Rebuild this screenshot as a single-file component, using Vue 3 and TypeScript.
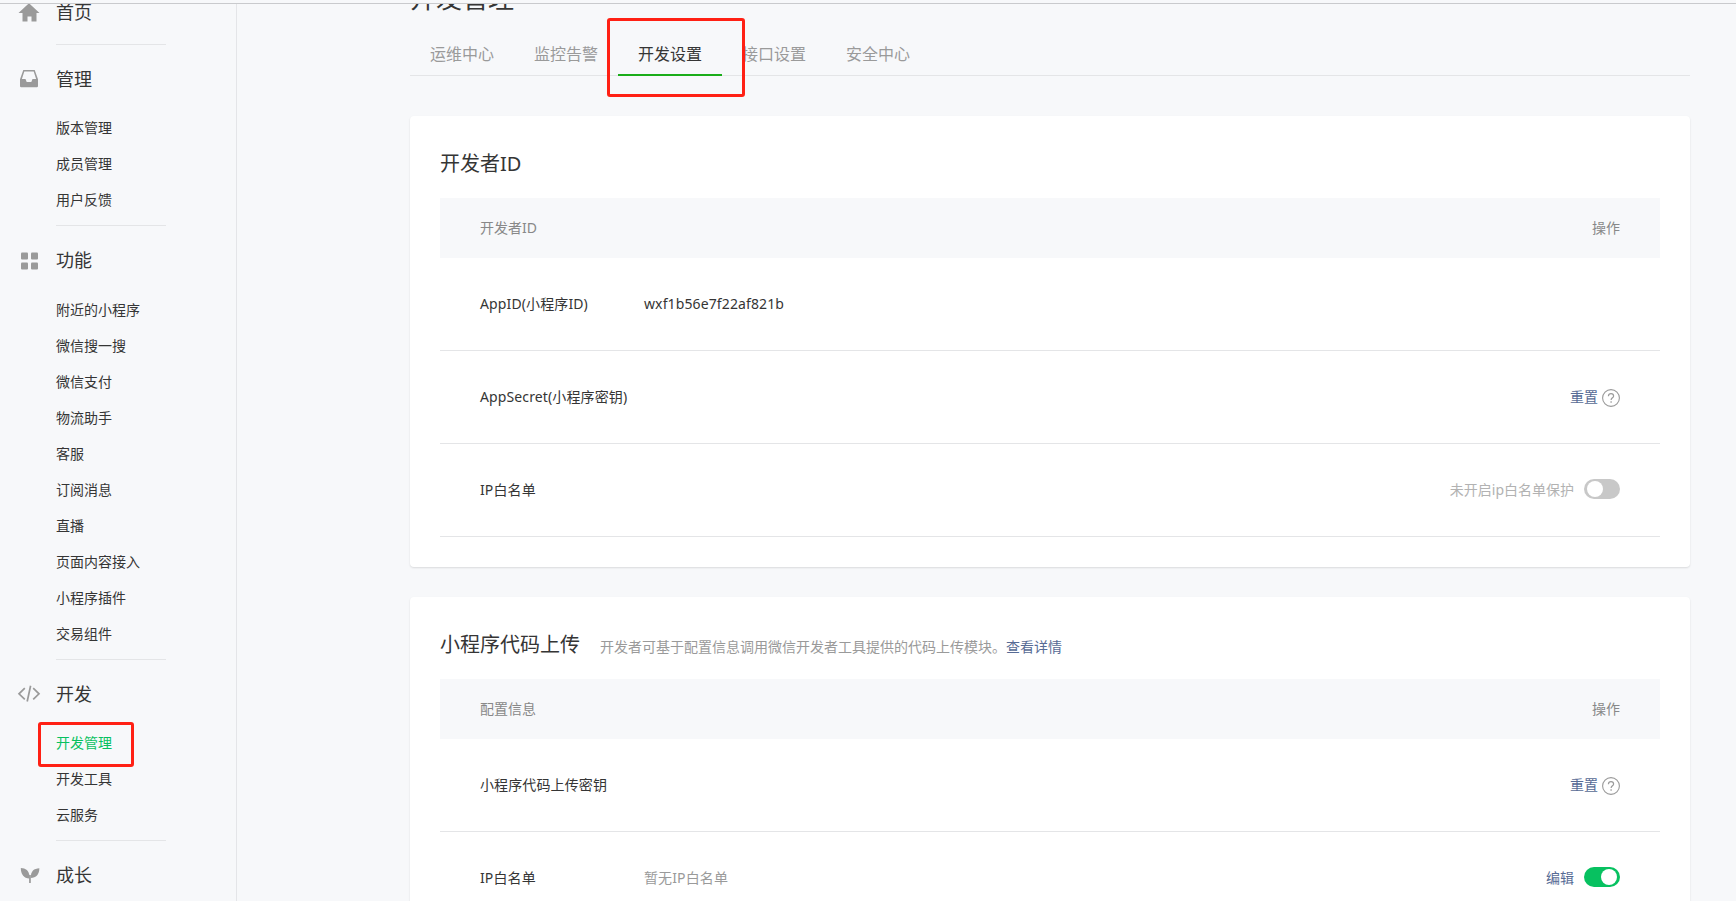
<script setup lang="ts">
interface MenuSection {
  icon: 'home' | 'inbox' | 'grid' | 'code' | 'plant'
  title: string
  items: string[]
}

const sections: MenuSection[] = [
  { icon: 'home', title: '首页', items: [] },
  { icon: 'inbox', title: '管理', items: ['版本管理', '成员管理', '用户反馈'] },
  {
    icon: 'grid',
    title: '功能',
    items: [
      '附近的小程序', '微信搜一搜', '微信支付', '物流助手', '客服',
      '订阅消息', '直播', '页面内容接入', '小程序插件', '交易组件',
    ],
  },
  { icon: 'code', title: '开发', items: ['开发管理', '开发工具', '云服务'] },
  { icon: 'plant', title: '成长', items: [] },
]
const activeItem = '开发管理'

const tabs: string[] = ['运维中心', '监控告警', '开发设置', '接口设置', '安全中心']
const activeTab = '开发设置'

interface Row {
  name: string
  value?: string
  muted?: boolean
  reset?: boolean
  hint?: string
  link?: string
  on?: boolean
}
interface Card {
  title: string
  desc?: string
  more?: string
  head: string
  rows: Row[]
}

const cards: Card[] = [
  {
    title: '开发者ID',
    head: '开发者ID',
    rows: [
      { name: 'AppID(小程序ID)', value: 'wxf1b56e7f22af821b' },
      { name: 'AppSecret(小程序密钥)', reset: true },
      { name: 'IP白名单', hint: '未开启ip白名单保护', on: false },
    ],
  },
  {
    title: '小程序代码上传',
    desc: '开发者可基于配置信息调用微信开发者工具提供的代码上传模块。',
    more: '查看详情',
    head: '配置信息',
    rows: [
      { name: '小程序代码上传密钥', reset: true },
      { name: 'IP白名单', value: '暂无IP白名单', muted: true, link: '编辑', on: true },
    ],
  },
]
</script>

<template>
  <div class="page">
    <div class="topbar"></div>
    <div class="body">
      <aside class="side">
        <section v-for="s in sections" :key="s.title" class="section">
          <h3 class="section-title">
            <svg class="icon" viewBox="0 0 24 24" width="24" height="24">
              <g v-if="s.icon === 'home'" fill="#9a9a9a">
                <path d="M12 2.2 22.5 12h-3v8.5h-5v-5h-4v5h-5V12h-4z" />
              </g>
              <path
                v-else-if="s.icon === 'inbox'"
                fill="#9a9a9a"
                fill-rule="evenodd"
                d="M6.3 3h11.4L21 12.3V19a1.2 1.2 0 0 1-1.2 1.2H4.2A1.2 1.2 0 0 1 3 19v-6.700zM7.300 4.500 4.900 12h3.600l1.200 3h4.600l1.200-3h3.600L16.700 4.500z"
              />
              <g v-else-if="s.icon === 'grid'" fill="#9a9a9a">
                <rect x="4" y="3.500" width="7" height="7" rx="1" />
                <rect x="14" y="3.500" width="7" height="7" rx="1" />
                <rect x="4" y="13.500" width="7" height="7" rx="1" />
                <rect x="14" y="13.500" width="7" height="7" rx="1" />
              </g>
              <g v-else-if="s.icon === 'code'" fill="none" stroke="#9a9a9a" stroke-width="1.700">
                <path d="M7.800 6.200 2 11.800l5.800 5.600M16.200 6.200l5.800 5.600-5.800 5.600M13.600 3.700 10.200 19.500" />
              </g>
              <g v-else fill="#9a9a9a">
                <path d="M3.800 4c4.800.2 8.400 2.400 8.700 8.700v1.700C6.900 14.500 3.800 10.500 3.800 4z" />
                <path d="M22.400 4.200c-5.600.2-8.600 2.800-8.800 9.800 5.600-.2 8.600-3.600 8.800-9.800z" />
                <path d="M12.100 11h1.700v8h-1.700z" />
              </g>
            </svg>
            <span>{{ s.title }}</span>
          </h3>
          <ul v-if="s.items.length" class="menu">
            <li v-for="item in s.items" :key="item" :class="{ active: item === activeItem }">
              {{ item }}
              <i v-if="item === activeItem" class="mark mark-menu"></i>
            </li>
          </ul>
        </section>
      </aside>

      <main class="main">
        <h1 class="page-title">开发管理</h1>
        <nav class="tabs">
          <a v-for="t in tabs" :key="t" class="tab" :class="{ current: t === activeTab }">
            {{ t }}
            <i v-if="t === activeTab" class="mark mark-tab"></i>
          </a>
        </nav>

        <section v-for="c in cards" :key="c.title" class="card">
          <header class="card-head">
            <h2>{{ c.title }}</h2>
            <p v-if="c.desc">{{ c.desc }}<a class="link">{{ c.more }}</a></p>
          </header>
          <div class="thead"><span>{{ c.head }}</span><span>操作</span></div>
          <div v-for="r in c.rows" :key="r.name" class="row">
            <span class="name" :class="{ fixed: r.value }">{{ r.name }}</span>
            <span v-if="r.value" class="value" :class="{ muted: r.muted }">{{ r.value }}</span>
            <div class="ops">
              <template v-if="r.reset">
                <a class="link">重置</a>
                <svg class="help" viewBox="0 0 18 18" width="18" height="18" fill="none" stroke="#9a9a9a">
                  <circle cx="9" cy="9" r="8.400" stroke-width="1.100" />
                  <path d="M6.400 7.200C6.400 5.600 7.500 4.600 9 4.600s2.600 1 2.600 2.300c0 1.900-2.500 2-2.500 4.200" stroke-width="1.200" />
                  <path d="M9.100 12.300v1.400" stroke-width="1.300" />
                </svg>
              </template>
              <span v-if="r.hint" class="hint">{{ r.hint }}</span>
              <a v-if="r.link" class="link edit">{{ r.link }}</a>
              <span v-if="r.on !== undefined" class="switch" :class="{ on: r.on }"></span>
            </div>
          </div>
        </section>
      </main>
    </div>
  </div>
</template>

<style>
body {
  background: #f7f8fa;
  overflow: hidden;
}
</style>

<style scoped>
.page {
  display: flex;
  flex-direction: column;
  height: 901px;
  overflow: hidden;
  background: #f7f8fa;
  color: #353535;
  font: 14px/1.6 "Noto Sans", "Noto Sans CJK SC", sans-serif;
}
h1, h2, h3, p, ul {
  margin: 0;
  padding: 0;
  font-weight: 400;
}
.topbar {
  flex: none;
  height: 3px;
  border-bottom: 1px solid #c9cacd;
}
.body {
  flex: 1;
  min-height: 0;
  display: flex;
  overflow: hidden;
}
.side {
  flex: none;
  width: 236px;
  border-right: 1px solid #e4e5e8;
}
.section::before {
  content: "";
  display: block;
  width: 110px;
  height: 1px;
  margin-left: 56px;
  background: #e4e5e7;
}
.section:first-child {
  margin-top: -27px;
}
.section-title {
  display: flex;
  align-items: center;
  gap: 15px;
  height: 28.800px;
  padding: 20px 0 16.600px 17px;
  font-size: 18px;
  line-height: 28.800px;
}
.section:first-child .section-title {
  height: 29px;
  padding-bottom: 17px;
}
.icon {
  flex: none;
}
.menu {
  padding: 0 0 7px 56px;
  list-style: none;
}
.menu li {
  position: relative;
  height: 36px;
  line-height: 36px;
}
.menu li.active {
  color: #07c160;
}
.mark {
  position: absolute;
  box-sizing: border-box;
  border: 3px solid #ff2014;
  border-radius: 3px;
}
.mark-menu {
  left: -18px;
  top: -3px;
  width: 96px;
  height: 45px;
}
.main {
  flex: none;
  width: 1280px;
  margin: -23px 0 0 173px;
}
.page-title {
  height: 36px;
  font-size: 26px;
  line-height: 34px;
}
.tabs {
  display: flex;
  height: 58px;
  margin-bottom: 40px;
  border-bottom: 1px solid #e4e5e7;
}
.tab {
  position: relative;
  height: 57px;
  padding: 0 20px;
  border-bottom: 2px solid transparent;
  font-size: 16px;
  line-height: 75px;
  color: #9a9a9a;
}
.tab.current {
  color: #353535;
  border-color: #1aad19;
}
.mark-tab {
  z-index: 1;
  left: -11px;
  top: 1px;
  width: 138px;
  height: 79px;
}
.card {
  margin-bottom: 30px;
  padding: 0 30px 30px;
  background: #fff;
  border-radius: 4px;
  box-shadow: 0 1px 2px rgba(0, 0, 0, 0.12);
}
.card-head {
  display: flex;
  align-items: baseline;
  gap: 20px;
  height: 50px;
  padding-top: 32px;
}
.card-head h2 {
  font-size: 20px;
  line-height: 32px;
}
.card-head p {
  color: #9a9a9a;
}
.link {
  color: #576b95;
}
.thead {
  display: flex;
  justify-content: space-between;
  padding: 0 40px;
  line-height: 60px;
  background: #f7f8fa;
  color: #888;
}
.row {
  display: flex;
  align-items: center;
  height: 92px;
  padding: 0 40px;
  border-bottom: 1px solid #e4e5e7;
}
.name,
.value {
  letter-spacing: 0.12px;
}
.name.fixed {
  width: 164px;
}
.muted {
  color: #9a9a9a;
}
.ops {
  display: flex;
  align-items: center;
  margin-left: auto;
}
.help {
  margin: 2px 0 0 4px;
}
.hint {
  color: #b2b2b2;
}
.switch {
  width: 36px;
  height: 20px;
  box-sizing: border-box;
  margin: -1px 0 0 10px;
  padding: 2px 3px;
  border-radius: 10px;
  background: #c8c8c8;
}
.switch::before {
  content: "";
  display: block;
  width: 16px;
  height: 16px;
  border-radius: 50%;
  background: #fff;
}
.switch.on {
  background: #07c160;
}
.switch.on::before {
  margin-left: 14px;
}
</style>
